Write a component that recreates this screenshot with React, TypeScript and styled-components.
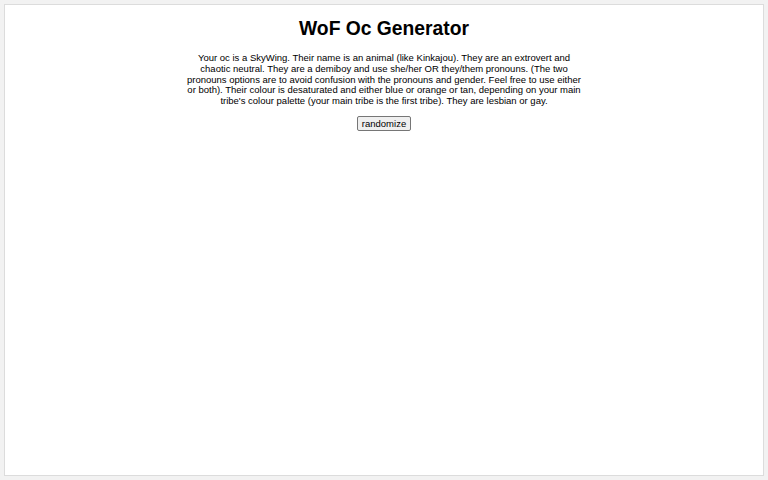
import React, { useState } from 'react';
import styled, { createGlobalStyle } from 'styled-components';

const GlobalStyle = createGlobalStyle`
  html, body {
    margin: 0;
    padding: 0;
    height: 100%;
    background: #f2f2f2;
  }
  #root {
    height: 100%;
  }
`;

const Page = styled.div`
  box-sizing: border-box;
  height: 100%;
  padding: 4px;
`;

const Sheet = styled.main`
  box-sizing: border-box;
  height: 100%;
  background: #ffffff;
  border: 1px solid #dcdcdc;
  display: flex;
  flex-direction: column;
  align-items: center;
  font-family: 'Liberation Sans', Arial, sans-serif;
  color: #000;
`;

const Title = styled.h1`
  margin: 13px 0 0;
  font-size: 19.3px;
  font-weight: bold;
  line-height: 22px;
`;

const Blurb = styled.p`
  margin: 13px 0 0;
  max-width: 400px;
  font-size: 9.5px;
  line-height: 10.75px;
  text-align: center;
`;

const RandomButton = styled.button`
  margin-top: 9px;
  font-family: 'Liberation Sans', Arial, sans-serif;
  font-size: 9.5px;
  padding: 1px 4px;
  background: #efefef;
  border: 1px solid #767676;
  border-radius: 2px;
  color: #000;
`;

const blurb =
  "Your oc is a SkyWing. Their name is an animal (like Kinkajou). They are an extrovert and chaotic neutral. They are a demiboy and use she/her OR they/them pronouns. (The two pronouns options are to avoid confusion with the pronouns and gender. Feel free to use either or both). Their colour is desaturated and either blue or orange or tan, depending on your main tribe's colour palette (your main tribe is the first tribe). They are lesbian or gay.";

export default function App() {
  const [text] = useState(blurb);

  return (
    <Page>
      <GlobalStyle />
      <Sheet>
        <Title>WoF Oc Generator</Title>
        <Blurb>{text}</Blurb>
        <RandomButton>randomize</RandomButton>
      </Sheet>
    </Page>
  );
}
